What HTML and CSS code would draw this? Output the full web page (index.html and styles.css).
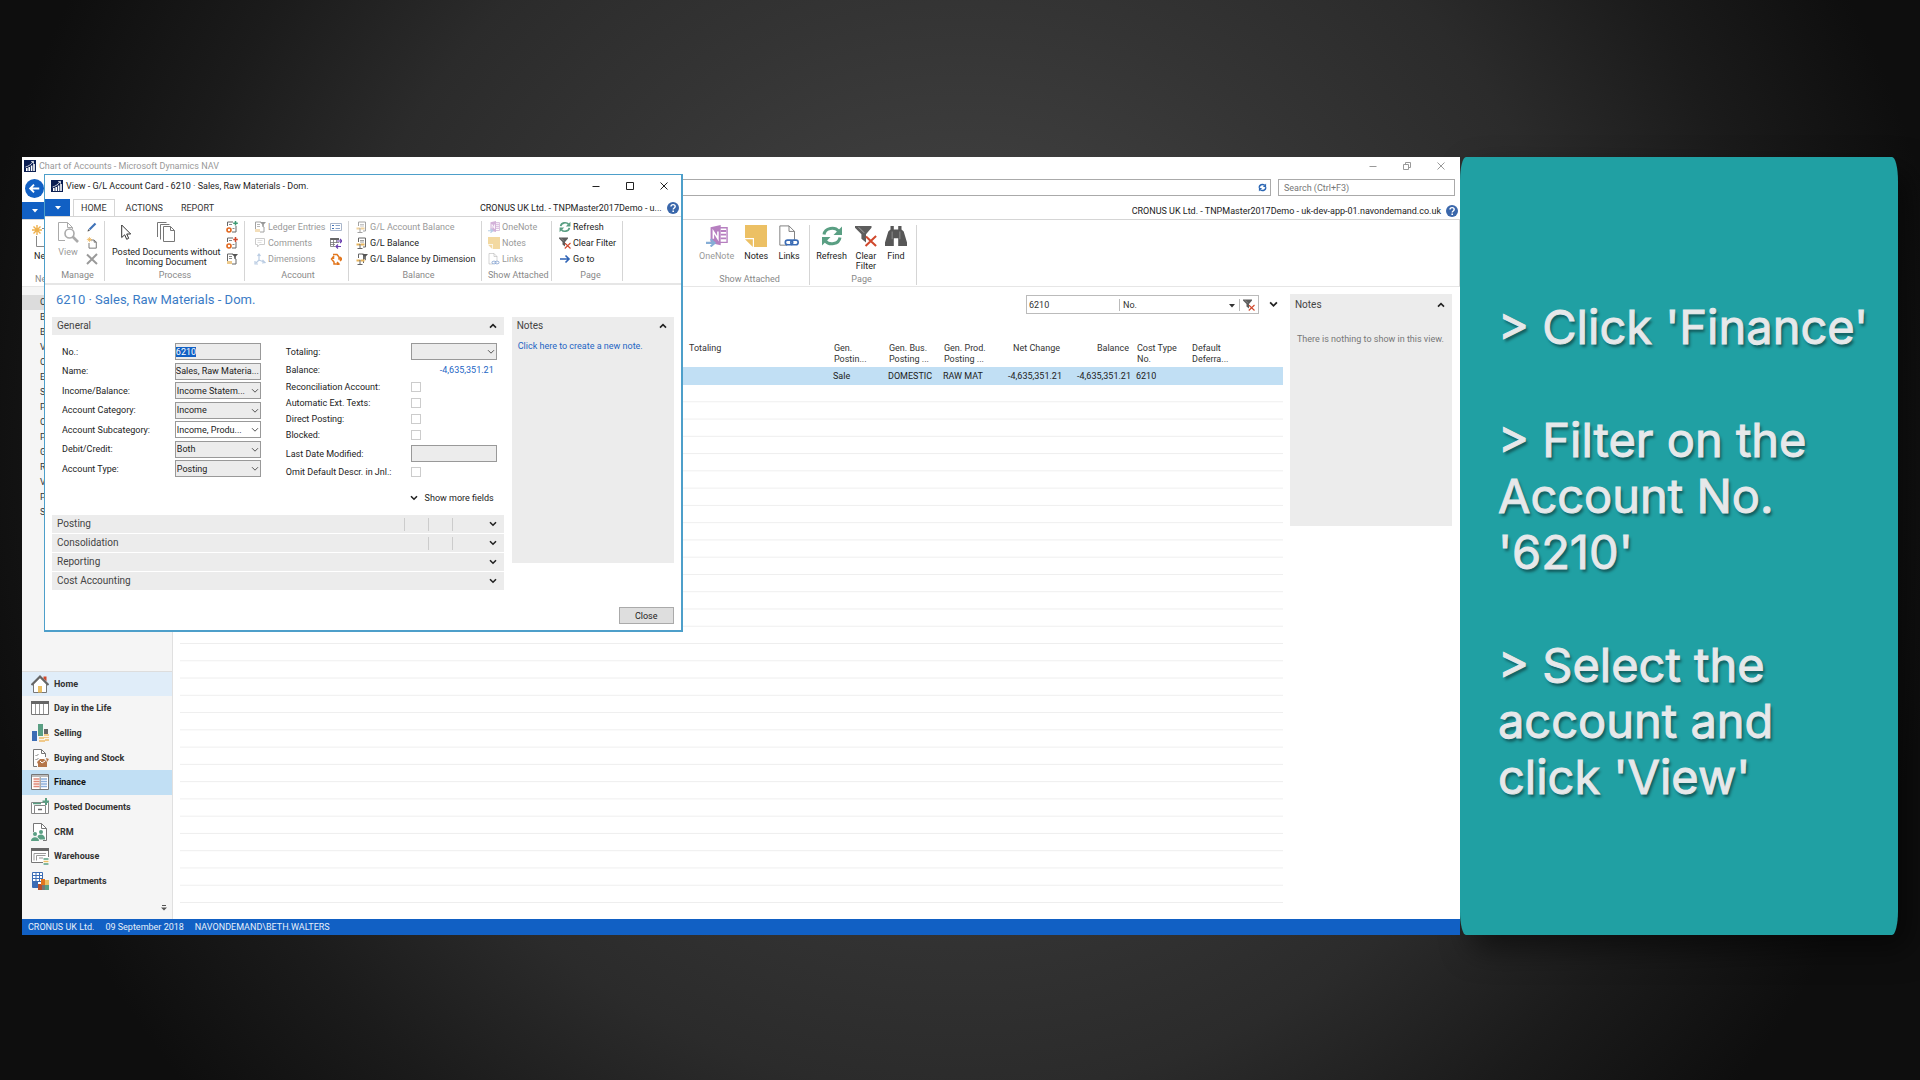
FILE: index.html
```html
<!DOCTYPE html>
<html lang="en">
<head>
    <meta charset="UTF-8">
    <meta name="viewport" content="width=device-width, initial-scale=1.0">
    <title>Chart of Accounts - Microsoft Dynamics NAV</title>
    <link rel="stylesheet" href="styles.css">
</head>
<body>
    <!-- Shared icons -->
    <svg class="symbols" aria-hidden="true">
        <symbol id="i-nav" viewBox="0 0 12 12"><rect width="12" height="12" fill="#0b1e52"/><path d="M2 11V8h1.600v3zM4.400 11V7H6v4zM6.800 11V5.500h1.600V11zM9.200 11V4h1.600v7z" fill="#fff"/><path d="M1.500 7C4 6.500 7 4.500 9 2M7 1.800l2.500-.5v2.400" stroke="#fff" fill="none" stroke-width=".8"/></symbol>
        <symbol id="i-down" viewBox="0 0 8 6"><path d="M1 1.200l3 3 3-3" stroke="#222" stroke-width="1.600" fill="none"/></symbol>
        <symbol id="i-up" viewBox="0 0 8 6"><path d="M1 4.600l3-3 3 3" stroke="#222" stroke-width="1.600" fill="none"/></symbol>
        <symbol id="i-chev" viewBox="0 0 8 6"><path d="M1 1.200l3 3 3-3" stroke="#555" fill="none"/></symbol>
        <symbol id="i-tri" viewBox="0 0 6 4"><path d="M0 0h6L3 3.500z" fill="currentColor"/></symbol>
        <symbol id="i-min" viewBox="0 0 10 10"><path d="M1.500 5.500h7" stroke="currentColor"/></symbol>
        <symbol id="i-max" viewBox="0 0 10 10"><path d="M1.500 1.500h7v7h-7z" stroke="currentColor" fill="none"/></symbol>
        <symbol id="i-restore" viewBox="0 0 10 10"><path d="M1.500 3.500h5v5h-5zM3.500 3.500v-2h5v5h-2" stroke="currentColor" fill="none"/></symbol>
        <symbol id="i-close" viewBox="0 0 10 10"><path d="M1.500 1.500l7 7M8.500 1.500l-7 7" stroke="currentColor"/></symbol>
        <symbol id="i-help" viewBox="0 0 12 12"><circle cx="6" cy="6" r="6" fill="#3a67ab"/><path d="M4 4.600c0-2.600 4.200-2.600 4.200 0C8.200 6 6.200 6 6.200 7.600" stroke="#fff" stroke-width="1.400" fill="none"/><rect x="5.400" y="8.500" width="1.600" height="1.500" fill="#fff"/></symbol>
        <symbol id="i-refresh" viewBox="0 0 22 22"><path d="M3 9.500C4 2.500 14 1.500 17.500 6" stroke="#5a9f83" stroke-width="3" fill="none"/><path d="M21 1.500v8.500h-8.500z" fill="#5a9f83"/><path d="M19 12.500C18 19.500 8 20.500 4.500 16" stroke="#5a9f83" stroke-width="3" fill="none"/><path d="M1 20.500V12h8.500z" fill="#5a9f83"/></symbol>
        <symbol id="i-filter" viewBox="0 0 24 24"><path d="M0 1h18v2l-6 7v9l-5-4v-5L0 3z" fill="#5d5d5d"/><path d="M4 2.500l6 6" stroke="#aaa"/><path d="M12 12.500l11 10.500M23 12L11.500 23" stroke="#d0482c" stroke-width="2.200"/></symbol>
        <symbol id="i-onenote" viewBox="0 0 24 24"><path d="M14 3h9v16h-9" fill="#fff" stroke="#b67fc0" stroke-width="1.500"/><path d="M16 6.500h6M16 10.500h6M16 14.500h6" stroke="#b67fc0" stroke-width="2"/><path d="M5 2.500L16 0v22L5 19.500z" fill="#b67fc0"/><path d="M8 15V7l5 8V7" stroke="#fff" stroke-width="1.700" fill="none"/><path d="M0 19.500h8M5 15.500l4.500 4-4.500 4" stroke="#86aed6" stroke-width="2.200" fill="none"/></symbol>
        <symbol id="i-note" viewBox="0 0 22 22"><path d="M0 0h22v22H9V13H0z" fill="#ecc064"/><path d="M0 14.200h7.800V22z" fill="#ecc064"/></symbol>
        <symbol id="i-links" viewBox="0 0 22 24"><path d="M9 22H1V1h10l6 6v9" fill="#fff" stroke="#777"/><path d="M11 1v6h6" fill="none" stroke="#777"/><rect x="7" y="16.500" width="8" height="5" rx="2.500" fill="none" stroke="#3b6cb5" stroke-width="1.800"/><rect x="13" y="16.500" width="8" height="5" rx="2.500" fill="none" stroke="#3b6cb5" stroke-width="1.800"/></symbol>
        <symbol id="i-find" viewBox="0 0 20 20"><path d="M5 1h3v3h4V1h3v3l2 2 3 10v3h-8v-7H8v7H0v-3L3 6l2-2z" fill="#575757"/><path d="M6.500 6v7M13.500 6v7" stroke="#888"/></symbol>
        <symbol id="i-docs" viewBox="0 0 20 22"><path d="M1.500 16V1.500h9M4.500 18.500v-15h9" fill="none" stroke="#777"/><path d="M7.500 5.500h7l4 4v11h-11z" fill="#fff" stroke="#777"/><path d="M14.500 5.500v4h4" fill="none" stroke="#777"/></symbol>
        <symbol id="i-view" viewBox="0 0 22 22"><path d="M8 19.500H1.500v-18h9l5 5V8" fill="none" stroke="#aaa"/><path d="M10.500 1.500v5h5" fill="none" stroke="#aaa"/><circle cx="12.500" cy="12.500" r="4.500" fill="#fff" stroke="#aaa" stroke-width="1.600"/><path d="M15.500 15.500l5.500 5.500" stroke="#aaa" stroke-width="2.600"/></symbol>
        <symbol id="i-pencil" viewBox="0 0 12 12"><path d="M3.500 8.500l6-6" stroke="#3f72b8" stroke-width="2.200"/><path d="M1.500 10.500l.7-2.500 1.800 1.800z" fill="#555"/></symbol>
        <symbol id="i-new" viewBox="0 0 12 14"><path d="M4.500 3.500h4l2.500 2.500v7H2.500V7" fill="none" stroke="#666"/><path d="M8.500 3.500V6H11" fill="none" stroke="#666"/><path d="M3 0v6M0 3h6M1 1l4 4M5 1L1 5" stroke="#eeb04b" stroke-width=".8"/></symbol>
        <symbol id="i-cross" viewBox="0 0 12 12"><path d="M1 1.500l10 9.500M11 1L1 11" stroke="#9a9a9a" stroke-width="2"/></symbol>
        <symbol id="i-docplus" viewBox="0 0 12 12"><path d="M6 11h4V5M1.500 5V1H7" stroke="#666" fill="none"/><path d="M3 3.500h3M6.500 7.500h2" stroke="#888"/><circle cx="3" cy="9" r="2" fill="none" stroke="#e2671d" stroke-width="1.600"/><path d="M9.500 0v4.500M7.200 2.200h4.600" stroke="#3e9a74" stroke-width="1.500"/></symbol>
        <symbol id="i-docred" viewBox="0 0 12 12"><path d="M6 11h4V5M1.500 5V1H7" stroke="#666" fill="none"/><path d="M3 3.500h3M6.500 7.500h2" stroke="#888"/><circle cx="3" cy="9" r="2" fill="none" stroke="#e2671d" stroke-width="1.600"/><path d="M9.500 0v5M7.200 2.500h4.600" stroke="#d0482c" stroke-width="1.500"/></symbol>
        <symbol id="i-docfilter" viewBox="0 0 12 12"><path d="M1.500 9V1H7M6 11h4V6" stroke="#666" fill="none"/><path d="M3 3.500h3M3 5.500h3" stroke="#888"/><path d="M6 1h6L9.800 3.500v3L8.200 5.500v-2z" fill="#555"/><path d="M1 8h5v3H1z" fill="#ecc98c"/></symbol>
        <symbol id="i-comment" viewBox="0 0 12 12"><path d="M1.500 1.500h9v6h-5L3.500 10V7.500h-2z" fill="none" stroke="#aaa"/><path d="M3.500 3.500h5M3.500 5.500h4" stroke="#ccc"/></symbol>
        <symbol id="i-dims" viewBox="0 0 12 12"><path d="M5 8V2M5 7l5 2M5 7L2 10M3.500 3L5 1l1.500 2M8.500 7l2.500 2.500-3 .5M1 8v3h3" fill="none" stroke="#8fadd2" stroke-width="1.200"/></symbol>
        <symbol id="i-card" viewBox="0 0 12 10"><path d="M.5 1.500h11v7H.5z" fill="#fff" stroke="#a9b6cb"/><path d="M2 3.500h2M2 6.500h2" stroke="#3f72b8" stroke-width="1.200"/><path d="M5.500 3.500h4.500M5.500 6.500h4.500" stroke="#8aa4c8"/></symbol>
        <symbol id="i-grid" viewBox="0 0 12 12"><path d="M0 1h9v2H0z" fill="#666"/><path d="M.5 1v8.500h5M3.500 3v6M6.500 3v3M0 5.500h9M0 7.500h5" stroke="#777" stroke-width=".8" fill="none"/><path d="M7 4h5M10 2l2 2-2 2M11 9.500H6M8 7.500l-2 2 2 2" stroke="#6a3fb0" stroke-width="1.200" fill="none"/></symbol>
        <symbol id="i-orange" viewBox="0 0 12 12"><path d="M3 1.500h4L9 4v2h3M10 4l2 2-2 2M4 3L1.500 6 4 9v2h4M7 9l2 2-2 1M3.500 3v3" stroke="#e2761d" stroke-width="1.500" fill="none"/></symbol>
        <symbol id="i-bal" viewBox="0 0 12 12"><path d="M2.500 5V1h7v9H7" stroke="#666" fill="#fff"/><path d="M4 3.500h4M4 5h4" stroke="#888" stroke-width=".8"/><path d="M.5 6.500h4v2h-4zM5 6.500h3.500v2H5z" fill="#e8b55c"/><path d="M4 7v4M1.500 11.500h5" stroke="#666"/></symbol>
        <symbol id="i-baldim" viewBox="0 0 12 12"><path d="M2.500 5V1h5v9" stroke="#666" fill="#fff"/><path d="M6 1h6L9.800 3.500v4L8.200 6V3.500z" fill="#555"/><path d="M.5 6.500h4v2h-4zM5 6.500h3.500v2H5z" fill="#e8b55c"/><path d="M4 7v4M1.500 11.500h5" stroke="#666"/></symbol>
        <symbol id="i-arrow" viewBox="0 0 12 12"><path d="M1 6h9M6.500 2.500L10 6l-3.500 3.500" stroke="#2d62b5" stroke-width="1.600" fill="none"/></symbol>
        <symbol id="i-sync" viewBox="0 0 10 10"><path d="M1.500 5.500C1 2 5 .5 7.500 2.500M8.500 4.500C9 8 5 9.500 2.500 7.500" stroke="#2b66b3" stroke-width="1.600" fill="none"/><path d="M9 .5v4H5.500zM1 9.500v-4h3.500z" fill="#2b66b3"/></symbol>
    </svg>

    <div class="stage">
        <main class="window">
            <div class="titlebar faded">
                <svg class="logo"><use href="#i-nav"/></svg>
                <span class="title">Chart of Accounts - Microsoft Dynamics NAV</span>
                <button class="winbtn" aria-label="Minimise"><svg><use href="#i-min"/></svg></button>
                <button class="winbtn" aria-label="Restore"><svg><use href="#i-restore"/></svg></button>
                <button class="winbtn" aria-label="Close"><svg><use href="#i-close"/></svg></button>
            </div>

            <div class="addressbar">
                <button class="back" aria-label="Back"><svg viewBox="0 0 20 20"><circle cx="10" cy="10" r="10" fill="#1160c4"/><path d="M15 10H6M9.500 6L5.500 10l4 4" stroke="#fff" stroke-width="2" fill="none"/></svg></button>
                <div class="address"><button aria-label="Reload"><svg class="s9"><use href="#i-sync"/></svg></button></div>
                <input class="search" type="text" placeholder="Search (Ctrl+F3)" aria-label="Search">
            </div>

            <div class="tabs main-tabs">
                <button class="app-menu" aria-label="Application menu"><svg><use href="#i-tri"/></svg></button>
                <span class="company">CRONUS UK Ltd. - TNPMaster2017Demo - uk-dev-app-01.navondemand.co.uk</span>
                <button class="help" aria-label="Help"><svg><use href="#i-help"/></svg></button>
            </div>

            <div class="ribbon main-ribbon">
                <div class="group new-group">
                    <div class="tools">
                        <button class="big"><svg viewBox="0 0 22 22"><path d="M4.500 11v10.500h14v-18H10" fill="none" stroke="#888"/><path d="M5 0v10M0 5h10M1.500 1.500l7 7M8.500 1.500l-7 7" stroke="#eeb04b" stroke-width="1.400"/></svg>New</button>
                    </div>
                    <div class="caption">New</div>
                </div>
                <div class="group">
                    <div class="tools">
                        <button class="big" disabled><svg><use href="#i-onenote"/></svg>OneNote</button>
                        <button class="big"><svg><use href="#i-note"/></svg>Notes</button>
                        <button class="big"><svg><use href="#i-links"/></svg>Links</button>
                    </div>
                    <div class="caption">Show Attached</div>
                </div>
                <div class="group page-group">
                    <div class="tools">
                        <button class="big"><svg><use href="#i-refresh"/></svg>Refresh</button>
                        <button class="big"><svg><use href="#i-filter"/></svg>Clear<br>Filter</button>
                        <button class="big"><svg><use href="#i-find"/></svg>Find</button>
                    </div>
                    <div class="caption">Page</div>
                </div>
            </div>

            <div class="workspace">
                <nav class="sidebar">
                    <ul class="places">
                        <li class="current"><a href="#">C</a></li>
                        <li><a href="#">B</a></li>
                        <li><a href="#">B</a></li>
                        <li><a href="#">V</a></li>
                        <li><a href="#">C</a></li>
                        <li><a href="#">E</a></li>
                        <li><a href="#">S</a></li>
                        <li><a href="#">P</a></li>
                        <li><a href="#">C</a></li>
                        <li><a href="#">P</a></li>
                        <li><a href="#">G</a></li>
                        <li><a href="#">R</a></li>
                        <li><a href="#">V</a></li>
                        <li><a href="#">P</a></li>
                        <li><a href="#">S</a></li>
                    </ul>
                    <ul class="areas">
                        <li class="hover"><a href="#"><svg viewBox="0 0 18 18"><path d="M2.500 9v8.500h13V9L9 2.500z" fill="#fff" stroke="#777"/><path d="M12.500 1.500h3v5l-3-3z" fill="#d0482c"/><path d="M.5 10L9 1.500l8.500 8.500" fill="none" stroke="#666" stroke-width="2"/><path d="M7 11h4v6.500H7z" fill="#ecc064"/></svg>Home</a></li>
                        <li><a href="#"><svg viewBox="0 0 18 18"><path d="M.5 2.500h17v13H.5z" fill="#fff" stroke="#777"/><path d="M0 2h18v3H0z" fill="#666"/><path d="M4.500 5v10M8.500 5v10M12.500 5v10" stroke="#999"/></svg>Day in the Life</a></li>
                        <li><a href="#"><svg viewBox="0 0 18 18"><path d="M1 7h5v10H1z" fill="#3b6cb5"/><path d="M7 0h5v12H7z" fill="#5a9f83"/><path d="M13 5h4v5h-4z" fill="#666"/><path d="M8 13h6v5H8zM13 10h5v7h-5z" fill="#f0c98a"/><path d="M8 15.500h6M13 12.500h5M13 14.500h5" stroke="#fff" stroke-width=".8"/></svg>Selling</a></li>
                        <li><a href="#"><svg viewBox="0 0 18 18"><path d="M6 17.500H2.500V.5h8l4 4V8" fill="#fff" stroke="#777"/><path d="M10.500.5v4h4" fill="none" stroke="#777"/><path d="M4.500 6l1 1 2-2M4.500 10l1 1 2-2" stroke="#888" fill="none"/><path d="M6 13l3-3h4l3 3v5H7v-3zM15 9l3 1-2 3z" fill="#b5764a"/><path d="M9 12l2 2 3-2" stroke="#fff" fill="none"/></svg>Buying and Stock</a></li>
                        <li class="current"><a href="#"><svg viewBox="0 0 18 18"><path d="M.5 1.500h17v15H.5z" fill="#fff" stroke="#777"/><path d="M1 2h16v2H1z" fill="#bbb"/><path d="M2.500 6h6M2.500 8.500h6M2.500 11h6M2.500 13.500h6" stroke="#e0897a" stroke-width="1.600"/><path d="M10 6h6M10 8.500h6M10 11h6M10 13.500h6" stroke="#8db0dd" stroke-width="1.600"/><path d="M9.200 4v12" stroke="#888"/></svg>Finance</a></li>
                        <li><a href="#"><svg viewBox="0 0 18 18"><path d="M.5 4.500h17v11H.5zM3.500 7.500h11v8h-11z" fill="#fff" stroke="#888"/><path d="M2 5.500h8" stroke="#5a9f83" stroke-width="1.500"/><path d="M7 11.500h4" stroke="#666" stroke-width="1.500"/><path d="M15 0v7M11.500 3.500h7" stroke="#5a9f83" stroke-width="2"/></svg>Posted Documents</a></li>
                        <li><a href="#"><svg viewBox="0 0 18 18"><path d="M2.500 9V.5h8l5 5v12H12" fill="#fff" stroke="#777"/><path d="M10.500.5v5h5" fill="none" stroke="#777"/><circle cx="4" cy="11" r="2" fill="#5a9f83"/><circle cx="10" cy="9" r="2" fill="#5a9f83"/><path d="M0 18c0-5 8-5 8 0zM6.500 14c1-4 8-3 7.500 2.500H9z" fill="#5a9f83"/></svg>CRM</a></li>
                        <li><a href="#"><svg viewBox="0 0 18 18"><path d="M.5 1.500h17v14H.5z" fill="#fff" stroke="#777"/><path d="M0 1h18v3H0z" fill="#666"/><path d="M3 13.500v-7h12M5.500 13.500v-5h9M8 11h5" stroke="#999" fill="none"/><path d="M12 10h7v8h-7z" fill="#fff"/><path d="M12.500 12h5M12.500 17h5" stroke="#5a9f83" stroke-width="1.500"/><path d="M12.500 14.500h5" stroke="#ecc064" stroke-width="1.500"/></svg>Warehouse</a></li>
                        <li><a href="#"><svg viewBox="0 0 18 18"><path d="M1.500.5h10v15h-10z" fill="#fff" stroke="#3b6cb5"/><path d="M1.500 3.500h10M1.500 6.500h10M1.500 9.500h10M5 .5v15M8.500.5v9" stroke="#3b6cb5"/><path d="M2 10h5v5H2z" fill="#3b6cb5"/><path d="M7 12h4v6H7z" fill="#b5502c"/><path d="M10 7h4v6h-4z" fill="#e2761d"/><path d="M14 8h4v5h-4z" fill="#ecc064"/><path d="M11 13h3v5h-3z" fill="#777"/><path d="M14 13h4v5h-4z" fill="#5a9f83"/></svg>Departments</a></li>
                    </ul>
                    <button class="overflow" aria-label="Configure buttons"><svg viewBox="0 0 6 6"><path d="M1 .5h4" stroke="#555"/><path d="M0 2.500h6l-3 3z" fill="#555"/></svg></button>
                </nav>

                <section class="list">
                    <div class="filterbar">
                        <div class="filterbox">
                            <input type="text" value="6210" aria-label="Filter value">
                            <div class="pick">
                                <select aria-label="Filter field"><option>No.</option></select>
                                <svg class="tri"><use href="#i-tri"/></svg>
                            </div>
                            <button aria-label="Clear filter"><svg class="s12"><use href="#i-filter"/></svg></button>
                        </div>
                        <button class="expand" aria-label="Expand filter"><svg><use href="#i-down"/></svg></button>
                    </div>
                    <table class="accounts">
                        <colgroup>
                            <col class="c-rest"><col class="c-total"><col class="c-post"><col class="c-post"><col class="c-post"><col class="c-num"><col class="c-num"><col class="c-post"><col class="c-last">
                        </colgroup>
                        <thead>
                            <tr>
                                <th></th>
                                <th>Totaling</th>
                                <th>Gen.<br>Postin...</th>
                                <th>Gen. Bus.<br>Posting ...</th>
                                <th>Gen. Prod.<br>Posting ...</th>
                                <th class="num">Net Change</th>
                                <th class="num">Balance</th>
                                <th>Cost Type<br>No.</th>
                                <th>Default<br>Deferra...</th>
                            </tr>
                        </thead>
                        <tbody>
                            <tr>
                                <td></td>
                                <td></td>
                                <td>Sale</td>
                                <td>DOMESTIC</td>
                                <td>RAW MAT</td>
                                <td class="num">-4,635,351.21</td>
                                <td class="num">-4,635,351.21</td>
                                <td>6210</td>
                                <td></td>
                            </tr>
                        </tbody>
                    </table>
                    <div class="empty-rows"></div>
                </section>

                <aside class="factbox main-notes">
                    <h2>Notes<svg><use href="#i-up"/></svg></h2>
                    <p class="nothing">There is nothing to show in this view.</p>
                </aside>
            </div>

            <footer class="statusbar">
                <span>CRONUS UK Ltd.</span>
                <span>09 September 2018</span>
                <span>NAVONDEMAND\BETH.WALTERS</span>
            </footer>

            <div class="dialog" role="dialog" aria-label="G/L Account Card">
                <div class="titlebar">
                    <svg class="logo"><use href="#i-nav"/></svg>
                    <span class="title">View - G/L Account Card - 6210 · Sales, Raw Materials - Dom.</span>
                    <button class="winbtn" aria-label="Minimise"><svg><use href="#i-min"/></svg></button>
                    <button class="winbtn" aria-label="Maximise"><svg><use href="#i-max"/></svg></button>
                    <button class="winbtn" aria-label="Close"><svg><use href="#i-close"/></svg></button>
                </div>

                <div class="tabs">
                    <button class="app-menu" aria-label="Application menu"><svg><use href="#i-tri"/></svg></button>
                    <button class="tab active">HOME</button>
                    <button class="tab">ACTIONS</button>
                    <button class="tab">REPORT</button>
                    <span class="company">CRONUS UK Ltd. - TNPMaster2017Demo - u...</span>
                    <button class="help" aria-label="Help"><svg><use href="#i-help"/></svg></button>
                </div>

                <div class="ribbon">
                    <div class="group g-manage">
                        <div class="tools">
                            <button class="big" disabled><svg><use href="#i-view"/></svg>View</button>
                            <div class="stack">
                                <button class="small" aria-label="Edit"><svg><use href="#i-pencil"/></svg></button>
                                <button class="small" aria-label="New"><svg><use href="#i-new"/></svg></button>
                                <button class="small" aria-label="Delete"><svg><use href="#i-cross"/></svg></button>
                            </div>
                        </div>
                        <div class="caption">Manage</div>
                    </div>
                    <div class="group g-process">
                        <div class="tools">
                            <button class="big"><svg><use href="#i-docs"/></svg>Posted Documents without<br>Incoming Document</button>
                            <div class="stack">
                                <button class="small" aria-label="General Posting Setup"><svg><use href="#i-docplus"/></svg></button>
                                <button class="small" aria-label="VAT Posting Setup"><svg><use href="#i-docred"/></svg></button>
                                <button class="small" aria-label="G/L Register"><svg><use href="#i-docfilter"/></svg></button>
                            </div>
                        </div>
                        <div class="caption">Process</div>
                    </div>
                    <div class="group g-account">
                        <div class="tools">
                            <div class="stack">
                                <button class="small" disabled><svg><use href="#i-docfilter"/></svg>Ledger Entries</button>
                                <button class="small" disabled><svg><use href="#i-comment"/></svg>Comments</button>
                                <button class="small" disabled><svg><use href="#i-dims"/></svg>Dimensions</button>
                            </div>
                            <div class="stack">
                                <button class="small" aria-label="Extended Texts"><svg><use href="#i-card"/></svg></button>
                                <button class="small" aria-label="Receivables-Payables"><svg><use href="#i-grid"/></svg></button>
                                <button class="small" aria-label="Where-Used List"><svg><use href="#i-orange"/></svg></button>
                            </div>
                        </div>
                        <div class="caption">Account</div>
                    </div>
                    <div class="group g-balance">
                        <div class="tools">
                            <div class="stack">
                                <button class="small" disabled><svg><use href="#i-bal"/></svg>G/L Account Balance</button>
                                <button class="small"><svg><use href="#i-bal"/></svg>G/L Balance</button>
                                <button class="small"><svg><use href="#i-baldim"/></svg>G/L Balance by Dimension</button>
                            </div>
                        </div>
                        <div class="caption">Balance</div>
                    </div>
                    <div class="group g-attached">
                        <div class="tools">
                            <div class="stack">
                                <button class="small" disabled><svg><use href="#i-onenote"/></svg>OneNote</button>
                                <button class="small" disabled><svg><use href="#i-note"/></svg>Notes</button>
                                <button class="small" disabled><svg><use href="#i-links"/></svg>Links</button>
                            </div>
                        </div>
                        <div class="caption">Show Attached</div>
                    </div>
                    <div class="group g-page">
                        <div class="tools">
                            <div class="stack">
                                <button class="small"><svg><use href="#i-refresh"/></svg>Refresh</button>
                                <button class="small"><svg><use href="#i-filter"/></svg>Clear Filter</button>
                                <button class="small"><svg><use href="#i-arrow"/></svg>Go to</button>
                            </div>
                        </div>
                        <div class="caption">Page</div>
                    </div>
                </div>

                <div class="card">
                    <h1>6210 · Sales, Raw Materials - Dom.</h1>
                    <div class="card-body">
                        <form class="fasttabs">
                            <h2 class="bar">General<svg><use href="#i-up"/></svg></h2>
                            <div class="fields">
                                <div class="col left">
                                    <label for="no">No.:</label><input id="no" type="text" value="6210" readonly>
                                    <label for="name">Name:</label><input id="name" type="text" value="Sales, Raw Materia..." readonly>
                                    <label for="incbal">Income/Balance:</label><div class="pick"><select id="incbal"><option>Income Statem...</option></select><svg><use href="#i-chev"/></svg></div>
                                    <label for="cat">Account Category:</label><div class="pick"><select id="cat"><option>Income</option></select><svg><use href="#i-chev"/></svg></div>
                                    <label for="subcat">Account Subcategory:</label><div class="pick"><select id="subcat" class="editable"><option>Income, Produ...</option></select><svg><use href="#i-chev"/></svg></div>
                                    <label for="dc">Debit/Credit:</label><div class="pick"><select id="dc"><option>Both</option></select><svg><use href="#i-chev"/></svg></div>
                                    <label for="type">Account Type:</label><div class="pick"><select id="type"><option>Posting</option></select><svg><use href="#i-chev"/></svg></div>
                                </div>
                                <div class="col right">
                                    <label for="totaling">Totaling:</label><div class="pick"><select id="totaling"><option></option></select><svg><use href="#i-chev"/></svg></div>
                                    <span>Balance:</span><a class="amount" href="#">-4,635,351.21</a>
                                    <label for="recon">Reconciliation Account:</label><input id="recon" type="checkbox">
                                    <label for="ext">Automatic Ext. Texts:</label><input id="ext" type="checkbox">
                                    <label for="direct">Direct Posting:</label><input id="direct" type="checkbox">
                                    <label for="blocked">Blocked:</label><input id="blocked" type="checkbox">
                                    <label for="modified">Last Date Modified:</label><input id="modified" type="text" readonly>
                                    <label for="omit">Omit Default Descr. in Jnl.:</label><input id="omit" type="checkbox">
                                </div>
                            </div>
                            <button type="button" class="more"><svg><use href="#i-down"/></svg>Show more fields</button>
                            <h2 class="bar">Posting<span class="marks"><i></i><i></i><i></i></span><svg><use href="#i-down"/></svg></h2>
                            <h2 class="bar">Consolidation<span class="marks"><i></i><i></i></span><svg><use href="#i-down"/></svg></h2>
                            <h2 class="bar">Reporting<svg><use href="#i-down"/></svg></h2>
                            <h2 class="bar">Cost Accounting<svg><use href="#i-down"/></svg></h2>
                        </form>
                        <aside class="factbox">
                            <h2>Notes<svg><use href="#i-up"/></svg></h2>
                            <a href="#">Click here to create a new note.</a>
                        </aside>
                    </div>
                    <div class="actions"><button class="close">Close</button></div>
                </div>

                <svg class="pointer" viewBox="0 0 11 16"><path d="M.7 1v12.500l3-2.700 2 4.500 2-1-2-4.300h4z" fill="#fff" stroke="#333"/></svg>
            </div>
        </main>

        <aside class="steps">
            <p>&gt; Click 'Finance'</p>
            <p>&gt; Filter on the Account No. '6210'</p>
            <p>&gt; Select the account and click 'View'</p>
        </aside>
    </div>

    <script>
        // The number is selected when the card opens
        const no = document.getElementById('no');
        no.focus();
        no.select();
    </script>
</body>
</html>
```
FILE: styles.css
```css
* {
    box-sizing: border-box;
}
body {
    margin: 0;
    min-height: 100vh;
    padding: 157px 22px 0;
    background: radial-gradient(circle at 50% 42%, #464646 0, #3c3c3c 300px, #343434 450px, #2b2b2b 640px, #1b1b1b 820px, #0e0e0e 1000px);
    color: #333;
    font-family: Roboto, sans-serif;
    font-size: 9px;
    line-height: 12px;
}
button, input, select {
    font: inherit;
    color: inherit;
    margin: 0;
    padding: 0;
    border: none;
    border-radius: 0;
    background: none;
}
button svg {
    display: block;
}
a {
    color: inherit;
    text-decoration: none;
}
h1, h2, p, ul {
    margin: 0;
    padding: 0;
    font-weight: normal;
    list-style: none;
}
.symbols {
    position: absolute;
    width: 0;
    height: 0;
}
.s9 {
    width: 9px;
    height: 9px;
}
.s12 {
    width: 12px;
    height: 12px;
}
.stage {
    display: flex;
    height: 72vh;
}

/* Windows */
.window {
    position: relative;
    flex: 1;
    display: flex;
    flex-direction: column;
    background: #fff;
}
.dialog {
    position: absolute;
    top: 17px;
    left: 22px;
    width: calc(44% + 6px);
    background: #fff;
    border: 1px solid #4d9fca;
    border-right-width: 2px;
    border-bottom-width: 2px;
}
.titlebar {
    display: flex;
    align-items: center;
    height: 22px;
    padding: 0 2px 4px;
}
.titlebar .title {
    flex: 1;
    padding-left: 3px;
}
.faded {
    color: #999;
}
.logo {
    width: 12px;
    height: 12px;
}
.winbtn {
    width: 34px;
    display: flex;
    justify-content: center;
}
.winbtn svg {
    width: 10px;
    height: 10px;
}
.dialog .titlebar {
    height: 24px;
    padding: 0 0 2px 6px;
    color: #222;
}
.addressbar {
    display: flex;
    height: 17px;
    padding-right: 5px;
}
.back {
    padding: 0 3px;
}
.back svg {
    width: 19px;
    height: 19px;
}
.address {
    flex: 1;
    display: flex;
    align-items: center;
    justify-content: flex-end;
    padding-right: 3px;
    border: 1px solid #aaa;
}
.search {
    width: 177px;
    margin-left: 7px;
    padding: 0 5px;
    border: 1px solid #aaa;
}
.search::placeholder {
    color: #777;
    opacity: 1;
}
.tabs {
    display: flex;
    align-items: flex-end;
    height: 18px;
    border-bottom: 1px solid #d5d5d5;
}
.app-menu {
    display: flex;
    align-items: center;
    justify-content: center;
    width: 25px;
    height: 17px;
    background: #1160c4;
    color: #fff;
}
.app-menu svg {
    width: 6px;
    height: 4px;
}
.tab {
    height: 17px;
    padding: 0 8px;
    border: 1px solid transparent;
    border-bottom: none;
}
.tab.active {
    margin: 0 2px 0 3px;
    padding: 0 7px;
    border-color: #d5d5d5;
}
.company {
    flex: 1;
    align-self: center;
    text-align: right;
    color: #222;
}
.help {
    align-self: center;
    padding: 0 2px 0 5px;
}
.help svg {
    width: 12px;
    height: 12px;
}
.main-tabs {
    height: 24px;
    padding-top: 6px;
}

/* Ribbon */
.ribbon {
    display: flex;
    height: 68px;
    padding: 4px 0 2px;
    border-bottom: 2px solid #e6e6e6;
    color: #222;
}
.group {
    display: flex;
    flex-direction: column;
    justify-content: space-between;
    border-right: 1px solid #d5d5d5;
}
.tools {
    display: flex;
    justify-content: space-between;
}
.caption {
    text-align: center;
    white-space: nowrap;
    color: #888;
}
.big {
    display: flex;
    flex-direction: column;
    align-items: center;
    line-height: 10px;
    text-align: center;
}
.big svg {
    width: 22px;
    height: 22px;
    margin-bottom: 4px;
}
.stack {
    display: flex;
    flex-direction: column;
    gap: 4px;
}
.small {
    display: flex;
    align-items: center;
    gap: 2px;
    height: 12px;
    white-space: nowrap;
}
.small svg {
    width: 12px;
    height: 12px;
    flex: none;
}
.ribbon button:disabled {
    color: #999;
}
.small:disabled svg {
    opacity: .6;
}
.g-manage {
    width: 60px;
    padding: 0 6px 0 12px;
}
.g-process {
    width: 140px;
    padding: 0 6px 0 7px;
}
.g-account {
    width: 104px;
    padding: 0 6px 0 9px;
}
.g-balance {
    width: 133px;
    padding-left: 7px;
}
.g-attached {
    width: 70px;
    padding: 0 6px;
}
.g-page {
    width: 71px;
    padding-left: 7px;
}
.main-ribbon {
    height: 67px;
    padding: 5px 0 1px;
    border-bottom-width: 1px;
    border-right: 1px solid #d5d5d5;
}
.main-ribbon .group {
    padding: 0 9px;
}
.main-ribbon .tools {
    gap: 10px;
}
.main-ribbon .new-group {
    width: 46%;
    padding-left: 10px;
    margin-right: 7px;
}
.main-ribbon .page-group {
    padding: 0 9px 0 6px;
}
.page-group .tools {
    gap: 8px;
}
.new-group .caption {
    text-align: left;
    padding-left: 3px;
}

/* Role centre */
.workspace {
    flex: 1;
    display: flex;
}
.sidebar {
    width: 151px;
    display: flex;
    flex-direction: column;
    padding-top: 8px;
    border-right: 1px solid #e0e0e0;
    background: #f5f5f5;
}
.places {
    flex: 1;
}
.places a {
    display: block;
    height: 15px;
    padding-left: 18px;
    line-height: 15px;
}
.places .current {
    background: #dcdcdc;
}
.areas {
    display: grid;
    grid-auto-rows: 1fr;
    height: 223px;
    border-top: 1px solid #ddd;
    font-weight: bold;
}
.areas a {
    display: flex;
    align-items: center;
    gap: 5px;
    height: 24px;
    padding-left: 9px;
}
.areas svg {
    width: 18px;
    height: 18px;
}
.areas .hover {
    background: #e0edf9;
}
.areas .current {
    background: #c1dff4;
    color: #111;
}
.overflow {
    align-self: flex-end;
    padding: 11px 5px 8px;
}
.overflow svg {
    width: 6px;
    height: 6px;
}
.list {
    flex: 1;
    display: flex;
    flex-direction: column;
    padding: 8px 7px 16px 7px;
}
.filterbar {
    display: flex;
    justify-content: flex-end;
    margin-bottom: 29px;
}
.filterbox {
    display: flex;
    align-items: center;
    width: 233px;
    height: 19px;
    border: 1px solid #bbb;
}
.filterbox > input {
    width: 92px;
    padding: 0 2px;
}
.filterbox .pick {
    flex: 1;
    border-left: 1px solid #bbb;
    border-right: 1px solid #bbb;
}
.filterbox button {
    padding: 0 3px;
}
.expand {
    width: 24px;
    padding: 0 5px 0 10px;
}
.expand svg {
    width: 9px;
    height: 7px;
}
.accounts {
    width: 100%;
    table-layout: fixed;
    border-collapse: collapse;
}
.accounts th, .accounts td {
    padding: 0;
    text-align: left;
    font-weight: normal;
    white-space: nowrap;
    vertical-align: top;
}
.accounts th {
    padding: 0 1px 2px;
    line-height: 11px;
}
.accounts td {
    height: 18px;
    vertical-align: middle;
    background: #c1dff4;
    color: #222;
}
.accounts .num {
    text-align: right;
    padding-right: 5px;
}
.accounts th.num {
    padding-right: 7px;
}
.c-total {
    width: 145px;
}
.c-post {
    width: 55px;
}
.c-num {
    width: 69px;
}
.c-last {
    width: 92px;
}
.empty-rows {
    flex: 1;
    background: linear-gradient(#fff 16px, #eee 16px) 0 0 / 100% 17px round;
}
.factbox {
    width: 162px;
    background: #ececec;
}
.factbox h2, .bar {
    display: flex;
    align-items: center;
    justify-content: space-between;
    height: 18px;
    padding: 0 7px 0 5px;
    font-size: 10px;
    color: #444;
}
.factbox h2 svg, .bar svg {
    width: 8px;
    height: 6px;
}
.main-notes {
    height: 232px;
    margin: 7px 8px 0 0;
}
.main-notes h2 {
    height: 22px;
}
.nothing {
    padding: 17px 7px;
    color: #777;
    white-space: nowrap;
}
.statusbar {
    display: flex;
    align-items: center;
    gap: 11px;
    height: 16px;
    padding: 0 6px;
    background: #1160c4;
    color: #e6effa;
}

/* Account card */
.card {
    padding: 6px 7px;
}
.card h1 {
    padding-left: 4px;
    font-size: 13px;
    line-height: 18px;
    color: #3b7cc6;
}
.card-body {
    display: flex;
    align-items: flex-start;
    gap: 8px;
    margin-top: 8px;
}
.fasttabs {
    flex: 1;
}
.bar {
    margin-bottom: 1px;
    background: #ececec;
}
.marks {
    flex: 1;
    display: flex;
    justify-content: flex-end;
    gap: 23px;
    padding-right: 36px;
}
.marks i {
    width: 1px;
    height: 13px;
    background: #ccc;
}
.fields {
    display: flex;
    gap: 25px;
    padding: 6px 7px 0 10px;
    color: #222;
}
.col {
    display: grid;
    align-items: center;
    white-space: nowrap;
}
.left {
    flex: 198;
    grid-template-columns: 1fr 86px;
    align-content: space-between;
    padding: 1px 0 3px;
}
.right {
    flex: 210;
    grid-template-columns: 1fr 86px;
}
.col input[type="text"], .col select {
    width: 100%;
    height: 17px;
    border: 1px solid #999;
    background: #ececec;
    outline: none;
}
.col input[type="text"]::selection {
    background: #1160c4;
    color: #fff;
}
.right .pick {
    margin: 1px 0;
}
.right input[type="text"] {
    margin: 2px 0;
}
.pick {
    position: relative;
    display: flex;
}
.pick select {
    flex: 1;
    padding: 0 3px;
    appearance: none;
    outline: none;
}
.col .pick select {
    padding: 0 1px;
}
.pick svg {
    position: absolute;
    right: 2px;
    top: 6px;
    width: 8px;
    height: 6px;
    pointer-events: none;
}
.pick .tri {
    right: 4px;
    top: 5px;
    width: 6px;
    height: 4px;
}
.col select.editable {
    background: #fff;
}
.col input[type="checkbox"] {
    appearance: none;
    width: 10px;
    height: 10px;
    margin: 3px 0;
    border: 1px solid #ccc;
    background: #fff;
}
.right label, .right span {
    line-height: 16px;
}
.amount {
    padding-right: 3px;
    line-height: 18px;
    text-align: right;
    color: #2465c4;
}
.more {
    display: flex;
    align-items: center;
    gap: 7px;
    margin: 12px 10px 11px auto;
    color: #222;
}
.more svg {
    width: 8px;
    height: 6px;
}
.card .factbox {
    height: 246px;
}
.card .factbox a {
    display: block;
    padding: 5px 6px;
    color: #2465c4;
}
.actions {
    display: flex;
    justify-content: flex-end;
    margin-top: 16px;
}
.close {
    width: 55px;
    height: 17px;
    border: 1px solid #aaa;
    background: #dedede;
    color: #222;
}
.pointer {
    position: absolute;
    left: 76px;
    top: 49px;
    width: 11px;
    height: 16px;
}

/* Instructions */
.steps {
    width: 23.35%;
    padding: 142px 20px 0 38px;
    border-radius: 6px / 24px;
    background: #20a0a3;
    box-shadow: 12px 14px 30px rgba(0, 0, 0, .5);
    color: #e6e8ea;
    font-family: Inter, sans-serif;
    font-size: 47px;
    font-weight: 600;
    line-height: 56px;
    -webkit-text-stroke: 1px #e6e8ea;
    text-shadow: 2px 3px 3px rgba(0, 0, 0, .45);
}
.steps p + p {
    margin-top: 57px;
}
```
